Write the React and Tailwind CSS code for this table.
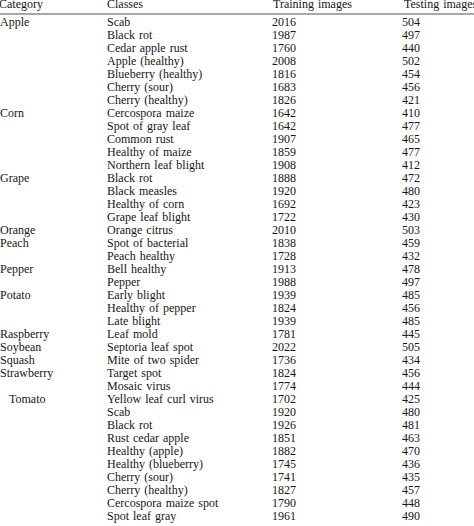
import React from "react";

const groups = [
  ["Apple", [["Scab", 2016, 504], ["Black rot", 1987, 497], ["Cedar apple rust", 1760, 440], ["Apple (healthy)", 2008, 502], ["Blueberry (healthy)", 1816, 454], ["Cherry (sour)", 1683, 456], ["Cherry (healthy)", 1826, 421]]],
  ["Corn", [["Cercospora maize", 1642, 410], ["Spot of gray leaf", 1642, 477], ["Common rust", 1907, 465], ["Healthy of maize", 1859, 477], ["Northern leaf blight", 1908, 412]]],
  ["Grape", [["Black rot", 1888, 472], ["Black measles", 1920, 480], ["Healthy of corn", 1692, 423], ["Grape leaf blight", 1722, 430]]],
  ["Orange", [["Orange citrus", 2010, 503]]],
  ["Peach", [["Spot of bacterial", 1838, 459], ["Peach healthy", 1728, 432]]],
  ["Pepper", [["Bell healthy", 1913, 478], ["Pepper", 1988, 497]]],
  ["Potato", [["Early blight", 1939, 485], ["Healthy of pepper", 1824, 456], ["Late blight", 1939, 485]]],
  ["Raspberry", [["Leaf mold", 1781, 445]]],
  ["Soybean", [["Septoria leaf spot", 2022, 505]]],
  ["Squash", [["Mite of two spider", 1736, 434]]],
  ["Strawberry", [["Target spot", 1824, 456], ["Mosaic virus", 1774, 444]]],
  ["Tomato", [["Yellow leaf curl virus", 1702, 425], ["Scab", 1920, 480], ["Black rot", 1926, 481], ["Rust cedar apple", 1851, 463], ["Healthy (apple)", 1882, 470], ["Healthy (blueberry)", 1745, 436], ["Cherry (sour)", 1741, 435], ["Cherry (healthy)", 1827, 457], ["Cercospora maize spot", 1790, 448], ["Spot leaf gray", 1961, 490]]],
];

const rows = [];
groups.forEach(([cat, items]) => {
  items.forEach((it, i) => {
    rows.push({ cat: i === 0 ? cat : "", cls: it[0], tr: it[1], te: it[2], indent: cat === "Tomato" });
  });
});

export default function App() {
  return (
    <div
      className="w-[474px] h-[526px] overflow-hidden bg-white text-[#161616] text-[12px] leading-[13px] [word-spacing:1px]"
      style={{ fontFamily: '"Liberation Serif", "Times New Roman", serif' }}
    >
      <div className="grid grid-cols-[107px_166px_131px_1fr] -mt-[2px] pb-[2px] border-b-2 border-[#a8a8a8] whitespace-nowrap">
        <div className="-ml-[1px]">Category</div>
        <div>Classes</div>
        <div>Training images</div>
        <div>Testing images</div>
      </div>
      <div className="pt-[1px]">
        {rows.map((r, i) => (
          <div key={i} className="grid grid-cols-[107px_166px_131px_1fr] h-[13px] whitespace-nowrap">
            <div className={r.indent ? "pl-[9px]" : ""}>{r.cat}</div>
            <div>{r.cls}</div>
            <div className="-ml-[1px]">{r.tr}</div>
            <div className="-ml-[2px]">{r.te}</div>
          </div>
        ))}
      </div>
    </div>
  );
}
